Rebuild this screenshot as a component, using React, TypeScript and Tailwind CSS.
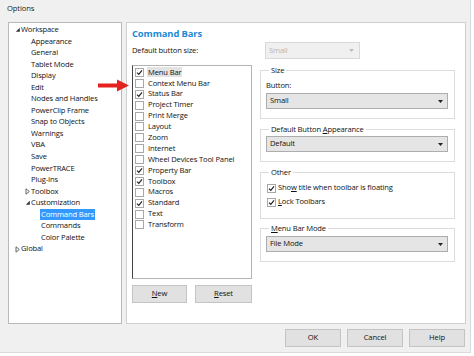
import React from "react";

const F = "font-['Open_Sans','Noto_Sans',sans-serif]";
const T = "text-[7.6px] tracking-[-0.15px]";

type TreeItem = { t: string; lvl: 0 | 1 | 2; exp?: "open" | "closed"; sel?: boolean };

const tree: TreeItem[] = [
  { t: "Workspace", lvl: 0, exp: "open" },
  { t: "Appearance", lvl: 1 },
  { t: "General", lvl: 1 },
  { t: "Tablet Mode", lvl: 1 },
  { t: "Display", lvl: 1 },
  { t: "Edit", lvl: 1 },
  { t: "Nodes and Handles", lvl: 1 },
  { t: "PowerClip Frame", lvl: 1 },
  { t: "Snap to Objects", lvl: 1 },
  { t: "Warnings", lvl: 1 },
  { t: "VBA", lvl: 1 },
  { t: "Save", lvl: 1 },
  { t: "PowerTRACE", lvl: 1 },
  { t: "Plug-Ins", lvl: 1 },
  { t: "Toolbox", lvl: 1, exp: "closed" },
  { t: "Customization", lvl: 1, exp: "open" },
  { t: "Command Bars", lvl: 2, sel: true },
  { t: "Commands", lvl: 2 },
  { t: "Color Palette", lvl: 2 },
  { t: "Global", lvl: 0, exp: "closed" },
];

const bars: [string, boolean][] = [
  ["Menu Bar", true],
  ["Context Menu Bar", false],
  ["Status Bar", true],
  ["Project Timer", false],
  ["Print Merge", false],
  ["Layout", false],
  ["Zoom", false],
  ["Internet", false],
  ["Wheel Devices Tool Panel", false],
  ["Property Bar", true],
  ["Toolbox", true],
  ["Macros", false],
  ["Standard", true],
  ["Text", false],
  ["Transform", false],
];

function Tri({ exp }: { exp?: "open" | "closed" }) {
  if (exp === "open")
    return (
      <svg width="5" height="7" viewBox="0 0 5 7" className="shrink-0 mr-[1px]">
        <polygon points="4.8,1.8 4.8,5.8 0.8,5.8" fill="#333" />
      </svg>
    );
  if (exp === "closed")
    return (
      <svg width="5" height="7" viewBox="0 0 5 7" className="shrink-0 mr-[1px]">
        <polygon points="1,0.8 4.3,3.5 1,6.2" fill="none" stroke="#555" strokeWidth="0.9" />
      </svg>
    );
  return <span className="w-[6px] shrink-0" />;
}

function Check({ on }: { on: boolean }) {
  return (
    <span className="w-[9px] h-[9px] shrink-0 border border-[#a8a8a8] bg-white flex items-center justify-center">
      {on && (
        <svg width="7" height="7" viewBox="0 0 7 7">
          <polyline points="1,3.6 2.8,5.4 6,1.3" fill="none" stroke="#222" strokeWidth="1.2" />
        </svg>
      )}
    </span>
  );
}

function Arrow({ color = "#222" }: { color?: string }) {
  return (
    <svg width="5" height="3" viewBox="0 0 5 3">
      <polygon points="0,0 5,0 2.5,3" fill={color} />
    </svg>
  );
}

function Combo({ text }: { text: string }) {
  return (
    <div className={`h-[16px] flex items-center justify-between border border-[#adadad] bg-[#e5e5e5] pl-[3px] pr-[4px] ${T} leading-none text-[#111]`}>
      <span>{text}</span>
      <Arrow />
    </div>
  );
}

function Group({ label, children }: { label: React.ReactNode; children: React.ReactNode }) {
  return (
    <fieldset className="border border-[#dcdcdc] pl-[5px] pr-[6px] pb-[9px] w-[195px]">
      <legend className={`ml-[3px] px-[2px] ${T} leading-[10px] text-[#111]`}>{label}</legend>
      {children}
    </fieldset>
  );
}

function Btn({ children, w = "w-[56px]" }: { children: React.ReactNode; w?: string }) {
  return (
    <div className={`${w} h-[18px] border border-[#c4c4c4] bg-[#e1e1e1] flex items-center justify-center ${T} text-[#111]`}>
      {children}
    </div>
  );
}

export default function App() {
  return (
    <div className={`${F} w-[474px] h-[356px] bg-white`}>
      <div className="relative w-[471px] h-[353px] bg-[#f0f0f0] border-r border-b border-[#dadada] flex flex-col">
        <div className="h-[22px] pl-[7px] pt-[2px] text-[7.6px] tracking-[-0.1px] leading-[12px] text-[#222]">Options</div>
        <div className="flex gap-[4px] pl-[8px]">
          {/* tree */}
          <div className="w-[114px] h-[302px] bg-white border border-[#b9b9b9] pt-[1px]">
            {tree.map((it) => (
              <div
                key={it.t + it.lvl}
                className={`h-[11.55px] flex items-center ${T} leading-none text-[#111] ${
                  it.lvl === 0 ? "pl-[6px]" : it.lvl === 1 ? "pl-[16px]" : "pl-[26px]"
                }`}
              >
                <Tri exp={it.exp} />
                <span
                  className={
                    it.sel ? "bg-[#3399ff] text-white h-[11px] flex items-center px-[1px] -ml-[1px]" : ""
                  }
                >
                  {it.t}
                </span>
              </div>
            ))}
          </div>
          {/* right panel */}
          <div className="w-[340px] h-[302px] bg-white border border-[#cfcfcf] pl-[5px] pt-[3px]">
            <div className="h-[16px] leading-[16px] text-[9.4px] tracking-[-0.1px] font-bold text-[#1a8ad4]">Command Bars</div>
            <div className="flex">
              <div className="w-[120px] flex flex-col">
                <div className={`h-[16px] leading-[16px] ${T} text-[#111]`}>Default button size:</div>
                <div className="mt-[7px] h-[214px] border border-[#b4b4b4] border-l-[#444] pl-[2px] pt-[1px]">
                  {bars.map(([t, on], i) => (
                    <div key={t} className={`h-[10.9px] flex items-center ${T} leading-none text-[#111]`}>
                      <Check on={on} />
                      <span className={i === 0 ? "ml-[3px] bg-[#e3e3e3] px-[1px] h-[10px] flex items-center" : "ml-[4px]"}>{t}</span>
                    </div>
                  ))}
                </div>
                <div className="mt-[6px] flex justify-between">
                  <Btn w="w-[55px]">
                    <span>
                      <span className="underline">N</span>ew
                    </span>
                  </Btn>
                  <Btn w="w-[57px]">
                    <span>
                      <span className="underline">R</span>eset
                    </span>
                  </Btn>
                </div>
              </div>
              <div className="ml-[8px] flex flex-col">
                <div className={`ml-[5px] w-[95px] h-[17px] border border-[#d9d9d9] bg-[#f0f0f0] flex items-center justify-between pl-[3px] pr-[5px] ${T} text-[#b5b5b5]`}>
                  <span>Small</span>
                  <Arrow color="#bdbdbd" />
                </div>
                <div className="mt-[6px]">
                  <Group label="Size">
                    <div className={`mt-[5px] h-[11px] leading-[11px] ${T} text-[#111]`}>Button:</div>
                    <div className="mt-[2px]">
                      <Combo text="Small" />
                    </div>
                  </Group>
                </div>
                <div className="mt-[5px]">
                  <Group
                    label={
                      <span>
                        Default Button <span className="underline">A</span>ppearance
                      </span>
                    }
                  >
                    <div className="mt-[2px]">
                      <Combo text="Default" />
                    </div>
                  </Group>
                </div>
                <div className="mt-[5px]">
                  <Group label="Other">
                    <div className={`mt-[4px] h-[14px] flex items-center ${T} text-[#111] pl-[1px]`}>
                      <Check on />
                      <span className="ml-[2px]">
                        Sho<span className="underline">w</span> title when toolbar is floating
                      </span>
                    </div>
                    <div className={`h-[14px] flex items-center ${T} text-[#111] pl-[1px]`}>
                      <Check on />
                      <span className="ml-[2px]">
                        <span className="underline">L</span>ock Toolbars
                      </span>
                    </div>
                  </Group>
                </div>
                <div className="mt-[4px]">
                  <Group
                    label={
                      <span>
                        <span className="underline">M</span>enu Bar Mode
                      </span>
                    }
                  >
                    <div className="mt-[3px]">
                      <Combo text="File Mode" />
                    </div>
                  </Group>
                </div>
              </div>
            </div>
          </div>
        </div>
        <div className="mt-[5px] flex justify-end gap-[6px] pr-[5px]">
          <Btn>OK</Btn>
          <Btn>Cancel</Btn>
          <Btn>Help</Btn>
        </div>
        {/* red annotation arrow */}
        <svg className="absolute left-[98px] top-[79px]" width="32" height="13" viewBox="0 0 32 13">
          <rect x="0" y="4.5" width="20" height="4" fill="#e4231f" />
          <polygon points="19,0.5 31,6.5 19,12.5" fill="#e4231f" />
        </svg>
      </div>
    </div>
  );
}
